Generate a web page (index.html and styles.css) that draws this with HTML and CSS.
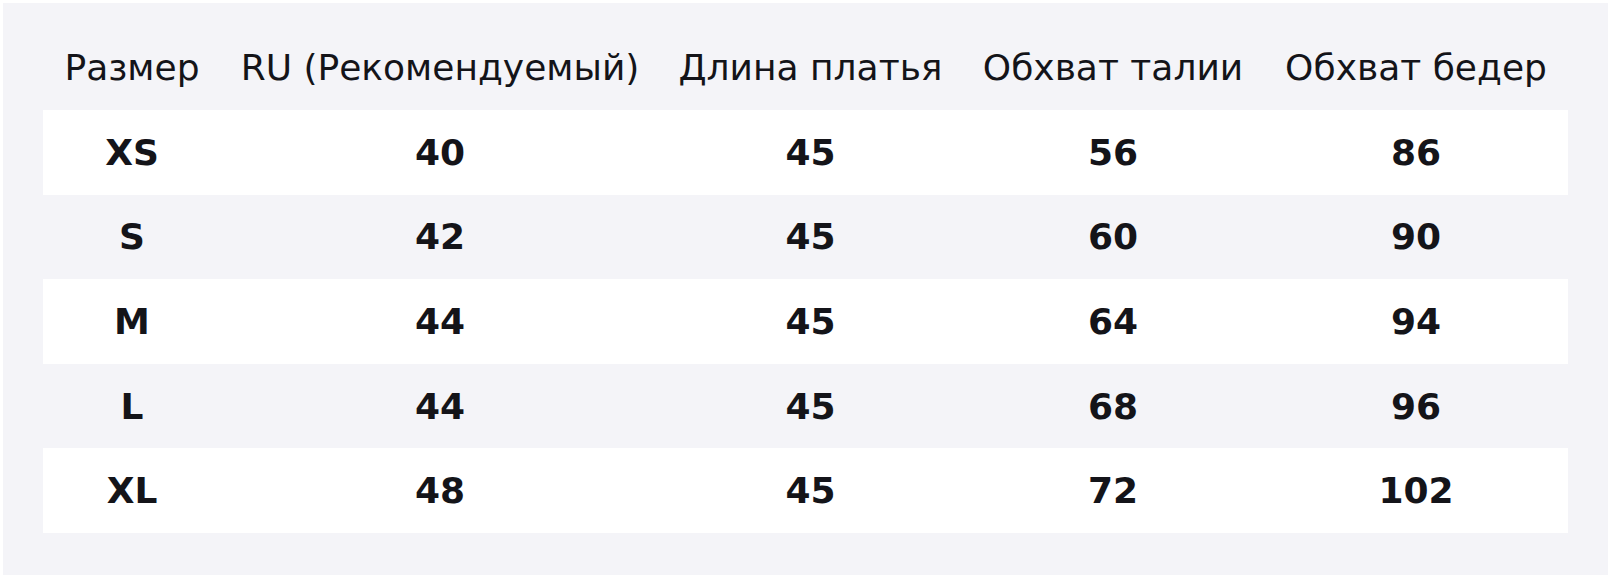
FILE: index.html
```html
<!DOCTYPE html>
<html lang="ru">
<head>
<meta charset="utf-8">
<title>Таблица размеров</title>
<link rel="stylesheet" href="styles.css">
</head>
<body>
<div class="panel">
  <table class="sizes">
    <colgroup>
      <col class="c1"><col class="c2"><col class="c3"><col class="c4"><col class="c5">
    </colgroup>
    <thead>
      <tr>
        <th>Размер</th>
        <th>RU (Рекомендуемый)</th>
        <th>Длина платья</th>
        <th>Обхват талии</th>
        <th>Обхват бедер</th>
      </tr>
    </thead>
    <tbody>
      <tr class="alt"><td>XS</td><td>40</td><td>45</td><td>56</td><td>86</td></tr>
      <tr><td>S</td><td>42</td><td>45</td><td>60</td><td>90</td></tr>
      <tr class="alt"><td>M</td><td>44</td><td>45</td><td>64</td><td>94</td></tr>
      <tr><td>L</td><td>44</td><td>45</td><td>68</td><td>96</td></tr>
      <tr class="alt"><td>XL</td><td>48</td><td>45</td><td>72</td><td>102</td></tr>
    </tbody>
  </table>
</div>
</body>
</html>
```

FILE: styles.css
```css
html, body {
  margin: 0;
  padding: 0;
  background: #ffffff;
}
body {
  padding: 3px;
  font-family: "DejaVu Sans", "Noto Sans", sans-serif;
  color: #141419;
}
.panel {
  background: #f4f4f8;
  height: 572px;
  box-sizing: border-box;
  padding: 22px 40px 42px;
}
.sizes {
  width: 100%;
  border-collapse: collapse;
  table-layout: fixed;
}
.c1 { width: 178px; }
.c2 { width: 438px; }
.c3 { width: 303px; }
.c4 { width: 302px; }
.c5 { width: 304px; }
.sizes th {
  font-weight: normal;
  font-size: 36px;
  height: 85px;
  padding: 0;
  text-align: center;
  vertical-align: middle;
  white-space: nowrap;
}
.sizes td {
  font-weight: bold;
  font-size: 36px;
  height: 84.6px;
  padding: 0;
  text-align: center;
  vertical-align: middle;
}
.sizes tr.alt td {
  background: #ffffff;
}
```
